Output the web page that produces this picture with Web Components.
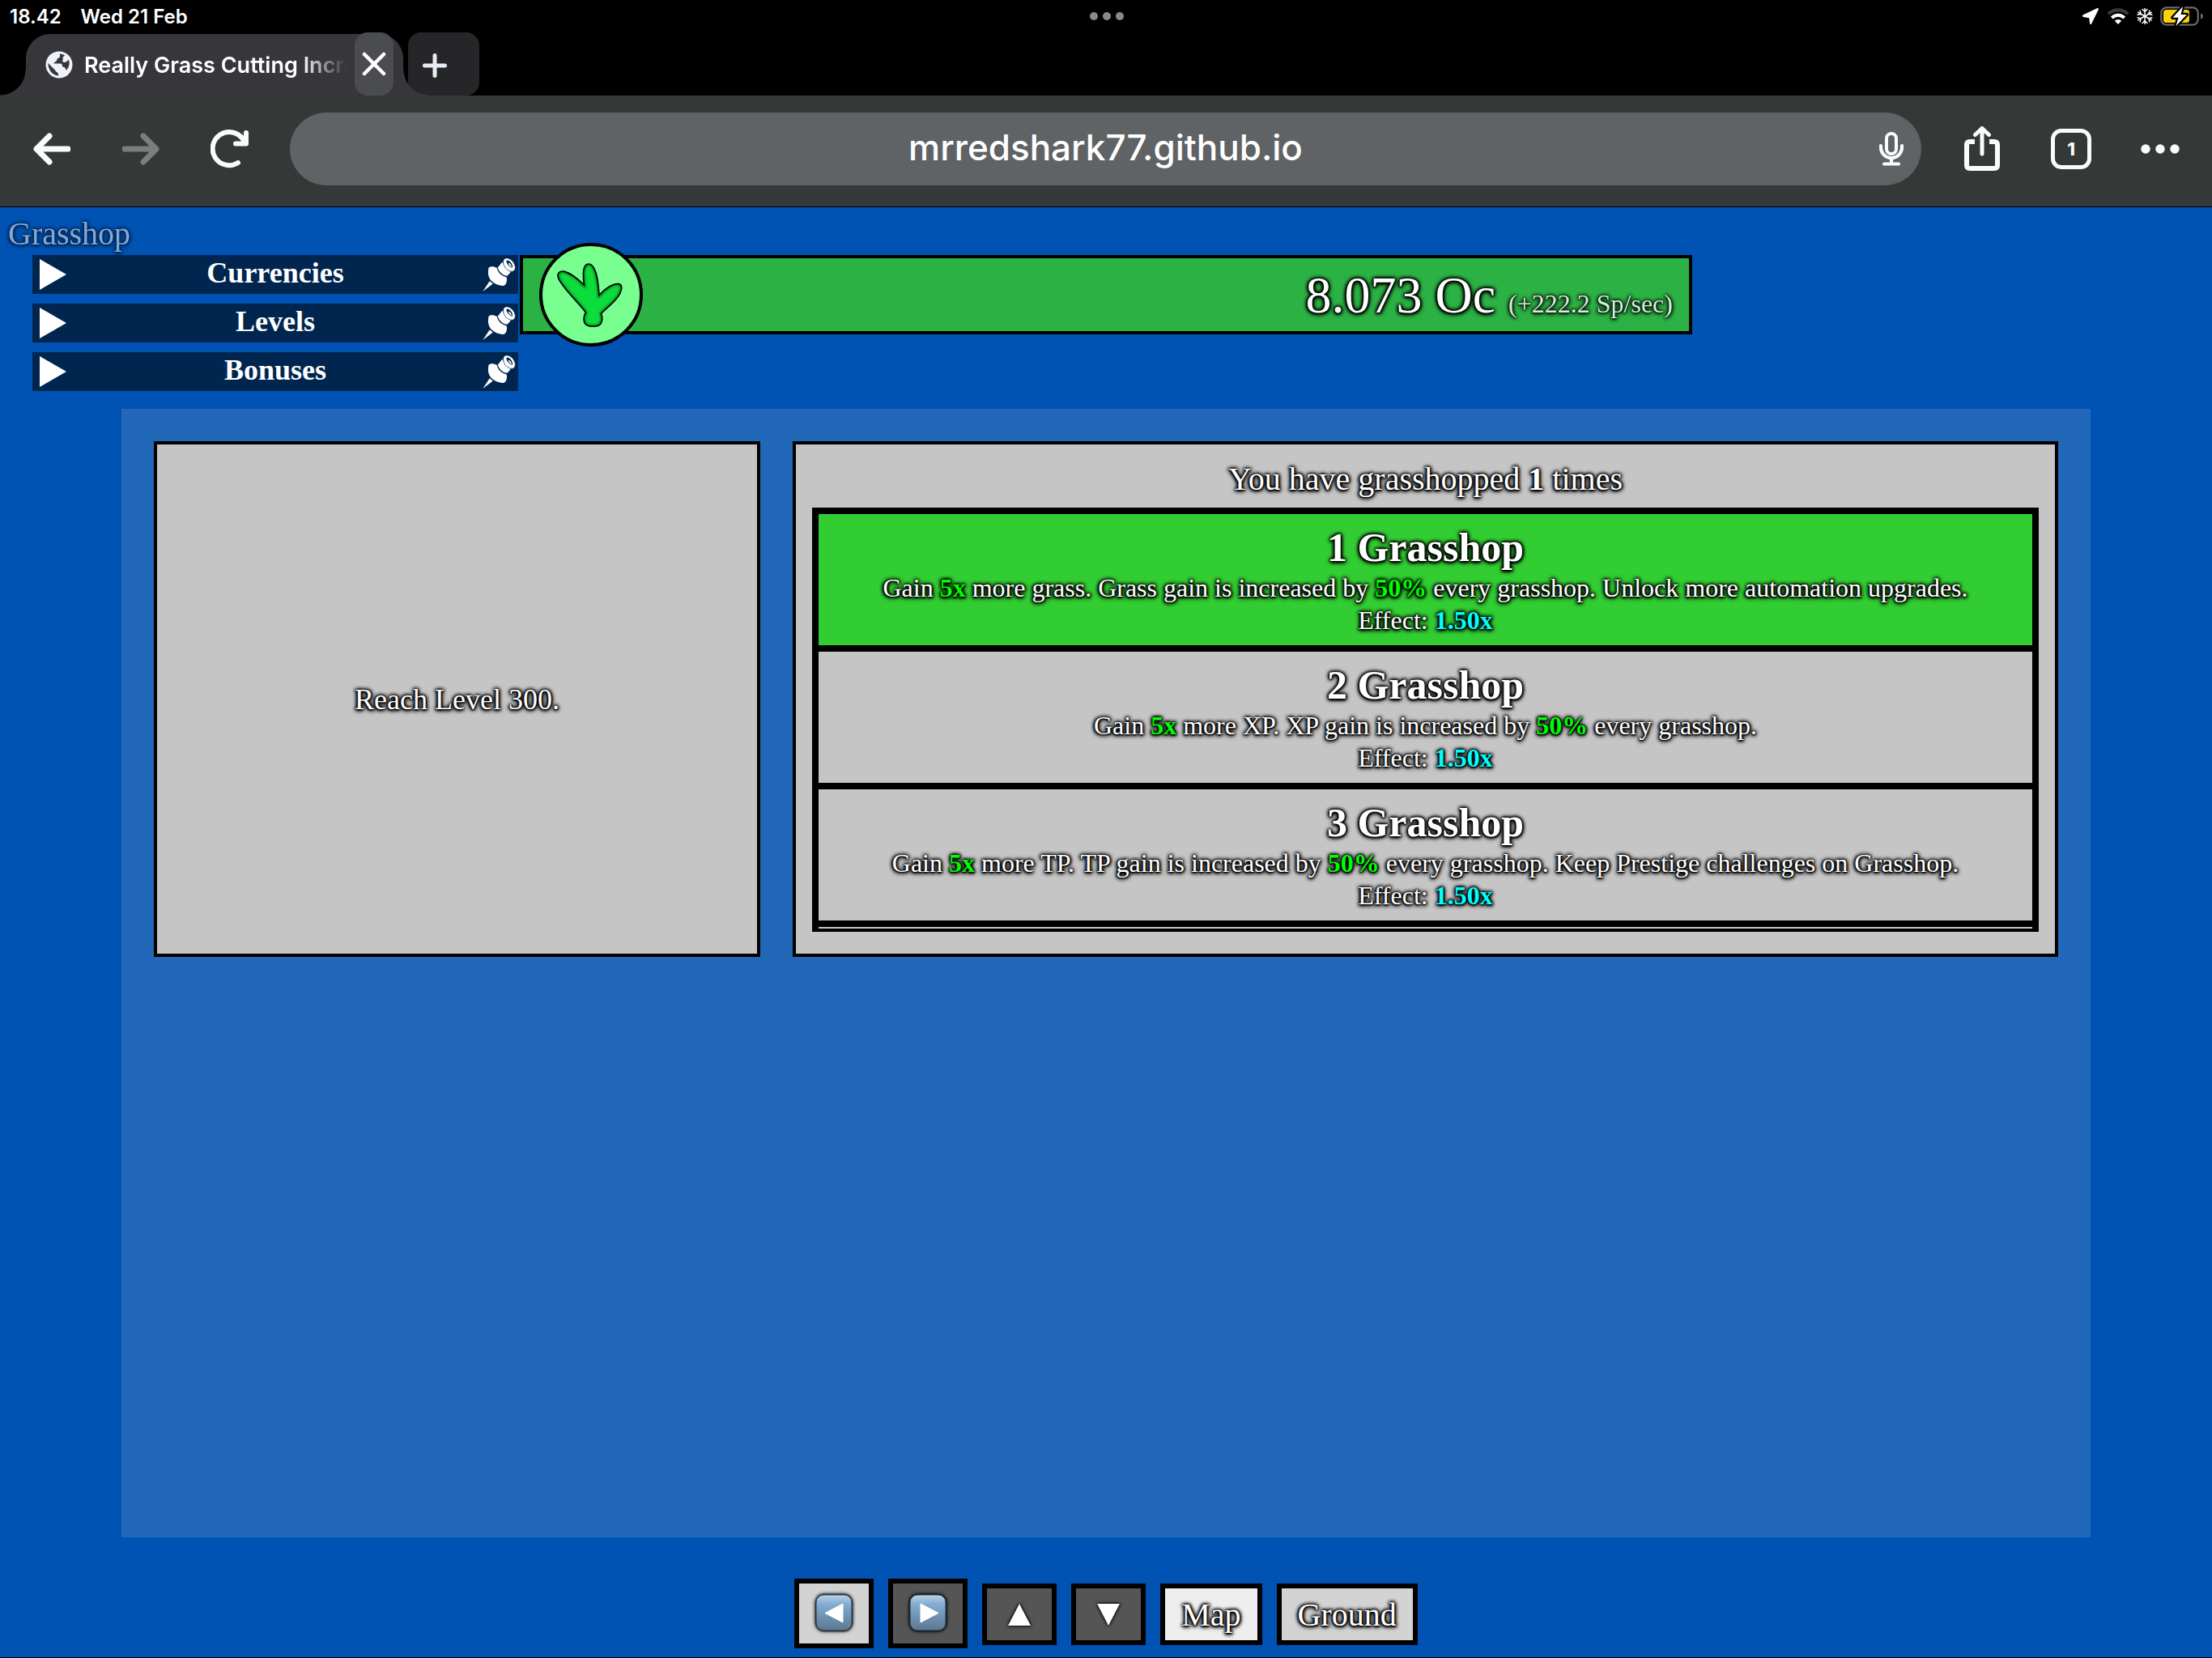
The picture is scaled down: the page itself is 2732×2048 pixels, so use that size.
<!DOCTYPE html>
<html lang="en">
<head>
<meta charset="utf-8">
<title>Really Grass Cutting Incremental</title>
<style>
  html, body { margin: 0; height: 100%; background: #000; }
  body { font-family: "Liberation Serif", "Times New Roman", serif; color: #fff; }
</style>
</head>
<body>
<app-window></app-window>

<template id="t-app-window">
  <style>
    :host { display: flex; flex-direction: column; min-height: 100vh; }
    header { background: #000; font-family: Inter, "Liberation Sans", sans-serif; }
    grass-game { flex: 1; }
  </style>
  <header>
    <status-bar></status-bar>
    <tab-strip><span>Really Grass Cutting Incremental</span></tab-strip>
    <browser-toolbar></browser-toolbar>
  </header>
  <grass-game></grass-game>
</template>

<template id="t-status-bar">
  <style>
    :host { display: grid; grid-template-columns: 1fr auto 1fr; align-items: center; height: 40px; padding: 0 10px 0 12px; font-size: 24px; font-weight: 600; }
    .left { display: flex; gap: 24px; }
    .right { display: flex; gap: 9px; justify-content: flex-end; align-items: center; }
    svg { display: block; }
  </style>
  <div class="left"><span>18.42</span><span>Wed 21 Feb</span></div>
  <svg width="42" height="10" viewBox="0 0 42 10" fill="#8a8a8a"><circle cx="5" cy="5" r="5"/><circle cx="21" cy="5" r="5"/><circle cx="37" cy="5" r="5"/></svg>
  <div class="right">
    <svg width="22" height="22" viewBox="0 0 22 22" fill="#fff"><path d="M19 1.2C20.5.8 21.3 1.700 20.700 3L12.400 20C11.600 21.600 10.200 21.200 10 19.700L9.300 13.200L2.200 12C.6 11.600.4 10.200 2 9.300Z"/></svg>
    <svg width="28" height="22" viewBox="0 0 28 22" fill="none" stroke-width="4"><path d="M1.800 8.300A17 17 0 0 1 26.200 8.300" stroke="#3a3a3a"/><path d="M6.300 13A10.800 10.800 0 0 1 21.700 13" stroke="#fff"/><path d="M14 21L9.800 16.800A6 6 0 0 1 18.200 16.800Z" fill="#fff"/></svg>
    <svg width="20" height="22" viewBox="-10 -11 20 22" fill="none" stroke="#fff" stroke-width="1.500" stroke-linecap="round">
      <g id="arm"><path d="M0-9.500V9.500M-3-8.500L0-5.500L3-8.500M-3 8.500L0 5.500L3 8.500"/></g>
      <use href="#arm" transform="rotate(60)"/><use href="#arm" transform="rotate(120)"/>
    </svg>
    <svg width="54" height="26" viewBox="0 0 54 26"><rect x="1.300" y="2.300" width="45.400" height="21.400" rx="6.500" fill="none" stroke="#6b6b6b" stroke-width="2.200"/><path d="M50 9.500C54 10.500 54 15.500 50 16.500Z" fill="#6b6b6b"/><rect x="4" y="5" width="32" height="16" rx="3.500" fill="#fdd106"/><path d="M28 1L15.500 14.800H22.500L19.500 25L33 11H25.500Z" fill="#fff" stroke="#000" stroke-width="4.500" paint-order="stroke" stroke-linejoin="round"/></svg>
  </div>
</template>

<template id="t-tab-strip">
  <style>
    :host { display: flex; align-items: flex-end; gap: 6px; height: 78px; padding-left: 32px; }
    .tab { position: relative; z-index: 1; box-sizing: border-box; display: flex; align-items: center; width: 466px; height: 76px; padding: 0 12px 0 24px; background: #37373b; border-radius: 30px 30px 0 0; }
    .tab::before, .tab::after { content: ""; position: absolute; bottom: 0; width: 32px; height: 32px; }
    .tab::before { right: 100%; background: radial-gradient(circle at 0 0, transparent 31px, #37373b 32px); }
    .tab::after { left: 100%; background: radial-gradient(circle at 100% 0, transparent 31px, #37373b 32px); }
    .name { flex: 1; margin-left: 14px; overflow: hidden; white-space: nowrap; font-size: 27px; font-weight: 600; -webkit-mask-image: linear-gradient(90deg, #000 80%, transparent 97%); mask-image: linear-gradient(90deg, #000 80%, transparent 97%); }
    button { display: flex; align-items: center; height: 78px; border: 0; border-radius: 16px; color: #fff; padding: 0; }
    .close { width: 48px; margin: -2px 0 0; background: #4b4c50; justify-content: center; }
    .add { width: 88px; padding: 3px 0 0 18px; background: #262628; }
  </style>
  <div class="tab">
    <svg width="34" height="34" viewBox="0 0 34 34"><circle cx="17" cy="17" r="16.500" fill="#eef3fa"/><path d="M17.500 3.500C19 6.500 18 8.500 14.500 9.500C15 12 13.500 12.500 12 13.500L10 15.500H18.500C20.500 15.500 21 17 21 19.500C24.500 19.500 25.500 22 25.500 24C29 21 31 15 28.500 10.500C27 13.500 24 14.500 21.500 13.500C20.500 11.500 22.500 10.500 21.500 8.500C22 6.500 23.500 6 24 5.500C22 4 19.500 3.500 17.500 3.500ZM3.500 15C3 22 8 30 16 30.500C16.500 27.500 15 26.500 13 25.500C12 22.500 9 21 6 17.500Z" fill="#37373b"/></svg>
    <div class="name"><slot></slot></div>
    <button class="close" aria-label="Close tab"><svg width="30" height="30" viewBox="0 0 30 30" stroke="#fff" stroke-width="4.500" stroke-linecap="round"><path d="M3 3L27 27M27 3L3 27"/></svg></button>
  </div>
  <button class="add" aria-label="New tab"><svg width="30" height="30" viewBox="0 0 30 30" stroke="#e8edf5" stroke-width="5" stroke-linecap="round"><path d="M15 2.500V27.500M2.500 15H27.500"/></svg></button>
</template>

<template id="t-browser-toolbar">
  <style>
    :host { display: flex; align-items: center; padding: 21px 9px 26px; background: #343837; border-bottom: 1px solid #000; }
    button { display: flex; align-items: center; justify-content: center; width: 110px; height: 90px; padding: 0; border: 0; background: none; color: #fafbfd; font: 800 22px Inter, sans-serif; }
    svg { display: block; fill: none; stroke: #fafbfd; stroke-width: 6; stroke-linecap: round; stroke-linejoin: round; }
    .off svg { stroke: #7c7d7e; }
    form { flex: 1; display: flex; align-items: center; height: 90px; margin: 0 20px 0 19px; padding: 0 22px; border-radius: 45px; background: #5f6365; }
    input { flex: 1; min-width: 0; padding: 0 0 4px 30px; border: 0; outline: 0; background: none; color: #fff; text-align: center; font: 500 44px Inter, sans-serif; }
    form button { width: 30px; }
    .count { box-sizing: border-box; width: 50px; height: 50px; border: 5px solid #fafbfd; border-radius: 13px; line-height: 40px; text-align: center; }
  </style>
  <button aria-label="Back"><svg width="46" height="40" viewBox="0 0 46 40"><path d="M20 4L4 20L20 36M5 20H43" stroke-width="7"/></svg></button>
  <button class="off" aria-label="Forward"><svg width="46" height="40" viewBox="0 0 46 40"><path d="M26 4L42 20L26 36M41 20H3" stroke-width="7"/></svg></button>
  <button aria-label="Reload"><svg width="48" height="48" viewBox="0 0 48 48"><path d="M34 41A20.500 20.500 0 1 1 40 12M44 4V17.500H31M44 17.500L38 9"/></svg></button>
  <form>
    <input type="text" aria-label="Address" value="mrredshark77.github.io">
    <button type="button" aria-label="Voice search"><svg width="30" height="42" viewBox="0 0 30 42"><rect x="9" y="2" width="12" height="25" rx="6" stroke-width="4"/><path d="M2 17V19A13 13 0 0 0 28 19V17M15 33V39M6 39.500H24" stroke-width="4.200"/></svg></button>
  </form>
  <button aria-label="Share"><svg width="44" height="56" viewBox="0 0 44 56"><path d="M13 19H7Q3 19 3 23V48Q3 52 7 52H37Q41 52 41 48V23Q41 19 37 19H31" stroke-linecap="butt"/><path d="M22 34V4M13.500 10.500L22 2.500L30.500 10.500" stroke-width="5"/></svg></button>
  <button aria-label="Tabs"><span class="count">1</span></button>
  <button aria-label="Menu"><svg width="48" height="12" viewBox="0 0 48 12"><path d="M6 6H6M24 6H24M42 6H42" stroke-width="11.500"/></svg></button>
</template>

<template id="t-grass-game">
  <style>
    :host { --glow: 0 1px 2px #000, 0 0 3px #000, 0 0 4px #000, 0 0 5px #000, 0 1px 5px #000, 0 1px 6px #000; display: flex; flex-direction: column; background: #0052b3; border-bottom: 1px solid #000; }
    .place { height: 49px; padding: 10px 0 0 10px; font-size: 40px; line-height: 46px; text-shadow: var(--glow); opacity: .5; }
    .top { display: grid; grid-template-columns: 1fr 53% 1fr; align-items: start; height: 190px; }
    .drawers { display: grid; gap: 12px; padding: 0 2px 0 40px; }
    main { flex: 1; display: grid; grid-template-columns: 23fr 48fr; gap: 40px; align-content: start; margin: 0 150px; padding: 40px; background: #2169b8; text-shadow: var(--glow); }
    nav { display: flex; justify-content: center; align-items: baseline; gap: 18px; padding: 51px 0 11px; text-shadow: var(--glow); }
    .emoji { width: 46px; height: 46px; vertical-align: -7px; filter: drop-shadow(0 0 1px #000) drop-shadow(0 0 2px #000); }
    .tri { width: 40px; height: 30px; vertical-align: -1px; filter: drop-shadow(0 0 1px #000) drop-shadow(0 0 2px #000); }
    .intro { margin-bottom: 12px; font-size: 40px; line-height: 46px; }
  </style>
  <div class="place">Grasshop</div>
  <div class="top">
    <div class="drawers">
      <side-drawer>Currencies</side-drawer>
      <side-drawer>Levels</side-drawer>
      <side-drawer>Bonuses</side-drawer>
    </div>
    <currency-bar>8.073 Oc <span slot="rate">(+222.2 Sp/sec)</span></currency-bar>
  </div>
  <main>
    <info-box centered>Reach Level 300.</info-box>
    <info-box>
      <div class="intro">You have grasshopped <b>1</b> times</div>
      <milestone-list>
        <mile-stone done><span slot="title">1 Grasshop</span>Gain <b>5x</b> more grass. Grass gain is increased by <b>50%</b> every grasshop. Unlock more automation upgrades.<span slot="effect">1.50x</span></mile-stone>
        <mile-stone><span slot="title">2 Grasshop</span>Gain <b>5x</b> more XP. XP gain is increased by <b>50%</b> every grasshop.<span slot="effect">1.50x</span></mile-stone>
        <mile-stone><span slot="title">3 Grasshop</span>Gain <b>5x</b> more TP. TP gain is increased by <b>50%</b> every grasshop. Keep Prestige challenges on Grasshop.<span slot="effect">1.50x</span></mile-stone>
      </milestone-list>
    </info-box>
  </main>
  <nav>
    <nav-button tall label="Left" style="--face:#d3d3d3"><svg class="emoji" viewBox="0 0 46 46"><defs><linearGradient id="sky" x2="0" y2="1"><stop offset="0" stop-color="#b9d3ea"/><stop offset=".25" stop-color="#86aed2"/><stop offset=".6" stop-color="#6f93b3"/><stop offset="1" stop-color="#5c788f"/></linearGradient></defs><rect x="1" y="1" width="44" height="44" rx="9" fill="url(#sky)" stroke="#24364a"/><path d="M34 12V35L12 23.500Z" fill="#fff" stroke="#fff" stroke-linejoin="round"/></svg></nav-button>
    <nav-button tall label="Right" style="--face:#555"><svg class="emoji" viewBox="0 0 46 46"><rect x="1" y="1" width="44" height="44" rx="9" fill="url(#sky)" stroke="#24364a"/><path d="M14 12V35L36 23.500Z" fill="#fff" stroke="#fff" stroke-linejoin="round"/></svg></nav-button>
    <nav-button label="Up" style="--face:#555"><svg class="tri" viewBox="0 0 40 30"><path d="M20 2L34 29H6Z" fill="#fff"/></svg></nav-button>
    <nav-button label="Down" style="--face:#555"><svg class="tri" viewBox="0 0 40 30"><path d="M20 29L34 2H6Z" fill="#fff"/></svg></nav-button>
    <nav-button style="--face:#eee">Map</nav-button>
    <nav-button style="--face:#d3d3d3">Ground</nav-button>
  </nav>
</template>

<template id="t-side-drawer">
  <style>
    :host { display: block; }
    button { box-sizing: border-box; display: flex; align-items: center; width: 100%; height: 48px; padding: 0 3px 0 9px; border: 0; background: #002650; color: #fff; font: bold 36px "Liberation Serif", serif; }
    .label { flex: 1; padding: 0 0 4px 2px; }
    svg { display: block; }
  </style>
  <button aria-expanded="false">
    <svg width="33" height="38" viewBox="0 0 33 38"><path d="M0 0L33 19L0 38Z" fill="#fff"/></svg>
    <span class="label"><slot></slot></span>
    <svg width="41" height="41" viewBox="48 86 122 122" fill="#fff"><path d="M49 208L74 170L86 180Z"/><path d="M70 122C76 114 90 116 101 122C103 138 118 152 135 155C138 158 138 166 136 174C134 184 128 188 120 187C106 186 92 180 82 171C72 161 67 146 69 132Z"/><path d="M104 120L120 100L152 136L139 151C124 150 107 136 104 120Z"/><g transform="rotate(-38 146 110)"><ellipse cx="146" cy="110" rx="18" ry="28" stroke="#002650" stroke-width="2"/><ellipse cx="149" cy="108" rx="7" ry="16" fill="#002650"/><ellipse cx="148" cy="112" rx="3" ry="9"/></g></svg>
  </button>
</template>

<template id="t-currency-bar">
  <style>
    :host { box-sizing: border-box; position: relative; display: flex; align-items: center; justify-content: flex-end; height: 98px; padding: 2px 20px 0 0; border: 4px solid #000; background: #2cb144; text-shadow: var(--glow); }
    .badge { position: absolute; left: 20px; top: -19px; display: block; width: 128px; height: 128px; }
    .amount { font-size: 64px; white-space: pre; }
    ::slotted(span) { font-size: 32px; opacity: .8; }
  </style>
  <svg class="badge" viewBox="0 0 384 384"><circle cx="192" cy="192" r="186" fill="#78ff90" stroke="#000" stroke-width="12"/><defs><filter id="soft"><feGaussianBlur stdDeviation="5"/></filter><clipPath id="inside"><use href="#leaf"/></clipPath></defs><g transform="translate(-258 -28)"><path id="leaf" d="M430 287C424 270 352 205 330 162C320 140 335 130 352 134C380 142 405 165 424 184C420 150 417 108 440 106C468 105 476 165 480 222C500 198 530 178 553 180C572 186 560 215 548 230C530 255 500 275 487 291C493 302 492 316 486 328C475 341 440 341 428 328C421 318 422 298 430 287Z" fill="#0cdc3c"/><g clip-path="url(#inside)"><path d="M430 287C424 270 352 205 330 162C320 140 335 130 352 134C380 142 405 165 424 184C420 150 417 108 440 106C468 105 476 165 480 222C500 198 530 178 553 180C572 186 560 215 548 230C530 255 500 275 487 291C493 302 492 316 486 328C475 341 440 341 428 328C421 318 422 298 430 287Z" fill="none" stroke="#037a1c" stroke-width="12" filter="url(#soft)"/></g><path d="M430 287C424 270 352 205 330 162C320 140 335 130 352 134C380 142 405 165 424 184C420 150 417 108 440 106C468 105 476 165 480 222C500 198 530 178 553 180C572 186 560 215 548 230C530 255 500 275 487 291C493 302 492 316 486 328C475 341 440 341 428 328C421 318 422 298 430 287Z" fill="none" stroke="#000" stroke-width="5"/></g></svg>
  <div class="amount"><slot></slot><slot name="rate"></slot></div>
</template>

<template id="t-info-box">
  <style>
    :host { box-sizing: border-box; display: block; padding: 20px 20px 27px; border: 4px solid #000; background: #c5c5c5; text-align: center; }
    :host([centered]) { display: grid; place-content: center; padding: 20px; font-size: 36px; }
  </style>
  <slot></slot>
</template>

<template id="t-milestone-list">
  <style>
    :host { display: block; height: 516px; overflow: hidden; border: 4px solid #000; }
    .next { height: 170px; box-sizing: border-box; border: 4px solid #000; }
  </style>
  <slot></slot>
  <div class="next"></div>
</template>

<template id="t-mile-stone">
  <style>
    :host { box-sizing: border-box; display: block; height: 170px; padding-top: 13px; border: 4px solid #000; font-size: 32px; line-height: 40px; }
    :host([done]) { background: #32cd32; }
    h2 { margin: 0 0 1px; font-size: 50px; line-height: 57px; }
    ::slotted(b) { color: #0f0; }
    b { color: #0ff; }
  </style>
  <h2><slot name="title"></slot></h2>
  <div><slot></slot></div>
  <div>Effect: <b><slot name="effect"></slot></b></div>
</template>

<template id="t-nav-button">
  <style>
    :host { display: block; }
    button { height: 76px; padding: 0 20px; border: 6px solid #000; background: var(--face); color: #fff; font: 40px "Liberation Serif", serif; text-shadow: inherit; }
    :host([tall]) button { height: 86px; }
  </style>
  <button><slot></slot></button>
</template>

<script>
  const names = ["side-drawer", "currency-bar", "mile-stone", "milestone-list", "info-box", "nav-button",
    "status-bar", "tab-strip", "browser-toolbar", "grass-game", "app-window"];
  for (const name of names) {
    customElements.define(name, class extends HTMLElement {
      constructor() {
        super();
        const source = document.getElementById("t-" + name);
        this.attachShadow({ mode: "open" }).append(source.content.cloneNode(true));
      }
      connectedCallback() {
        const label = this.getAttribute("label");
        if (label) this.shadowRoot.querySelector("button").setAttribute("aria-label", label);
      }
    });
  }
</script>
</body>
</html>
